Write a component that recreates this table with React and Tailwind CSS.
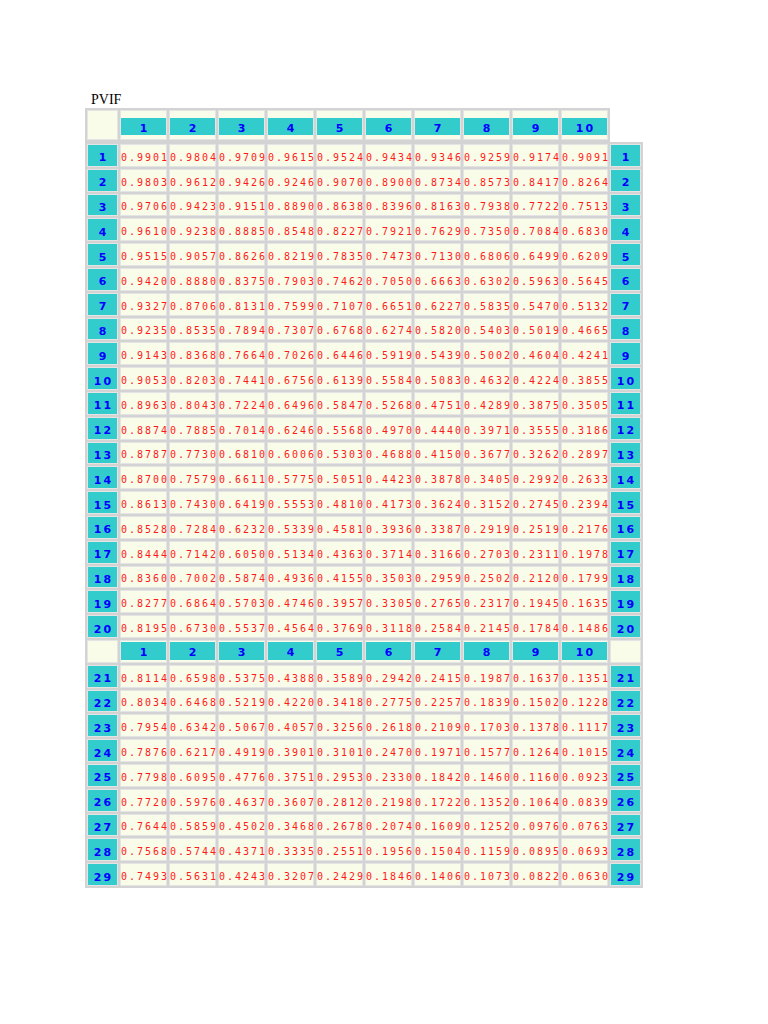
const rates = [1, 2, 3, 4, 5, 6, 7, 8, 9, 10];

const pvif = (n, r) => (1 / Math.pow(1 + r / 100, n)).toFixed(4);

function HeadCell({ label, tall }) {
  return (
    <div
      className={`flex flex-col justify-end border border-[#e4e4e4] bg-[#f9fce8] ${tall ? 'h-[30px] w-[47px] pb-[4px]' : 'pb-[2px]'}`}
    >
      <div
        className={`flex items-center justify-center bg-[#33cccc] pt-[4px] pl-[2px] font-['DejaVu_Sans',sans-serif] text-[11px] leading-[11px] font-bold tracking-[2px] text-[#0000ff] ${tall ? 'h-[17px]' : 'h-[18px]'}`}
      >
        {label}
      </div>
    </div>
  );
}

function LabelCell({ n }) {
  return (
    <div className="flex items-center justify-center border border-[#e4e4e4] bg-[#33cccc] pt-[5px] pl-[2px] font-['DejaVu_Sans',sans-serif] text-[11px] leading-[11px] font-bold tracking-[2px] text-[#0000ff]">
      {n}
    </div>
  );
}

function DataRow({ n }) {
  return (
    <>
      <LabelCell n={n} />
      {rates.map(r => (
        <div
          key={r}
          className="flex items-center whitespace-nowrap border border-[#e4e4e4] bg-[#f9fce8] pt-[5px] text-[10px] leading-[10px] tracking-[2px] text-[#ff1a1a]"
        >
          {pvif(n, r)}
        </div>
      ))}
      <LabelCell n={n} />
    </>
  );
}

export default function App() {
  const firstRows = Array.from({ length: 20 }, (_, i) => i + 1);
  const secondRows = Array.from({ length: 9 }, (_, i) => i + 21);

  return (
    <div className="min-h-screen bg-white pt-[92px] pl-[85px] font-['DejaVu_Sans_Mono',monospace]">
      <div className="pl-[6px] font-['Liberation_Serif',serif] text-[14px] leading-[16px] text-black">PVIF</div>

      <div className="flex flex-col items-start">
        {/* top header row has no cell over the right label column */}
        <div className="flex gap-[2px] bg-[#d3d3d3] p-[2px]">
          <div className="h-[30px] w-[31px] border border-[#e4e4e4] bg-[#f9fce8]"></div>
          {rates.map(r => (
            <HeadCell key={r} label={r} tall />
          ))}
        </div>

        <div className="grid grid-cols-[31px_repeat(10,47px)_31px] auto-rows-[22.8px] gap-[2px] bg-[#d3d3d3] p-[2px]">
          {firstRows.map(n => (
            <DataRow key={n} n={n} />
          ))}

          <div className="border border-[#e4e4e4] bg-[#f9fce8]"></div>
          {rates.map(r => (
            <HeadCell key={r} label={r} />
          ))}
          <div className="border border-[#e4e4e4] bg-[#f9fce8]"></div>

          {secondRows.map(n => (
            <DataRow key={n} n={n} />
          ))}
        </div>
      </div>
    </div>
  );
}
